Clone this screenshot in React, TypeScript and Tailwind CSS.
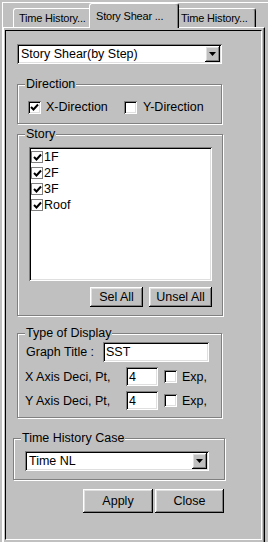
import React from 'react';

const raised =
  'bg-[#c0c0c0] shadow-[inset_-1px_-1px_0_#000,inset_1px_1px_0_#fff,inset_-2px_-2px_0_#808080,inset_2px_2px_0_#dfdfdf]';
const sunken =
  'bg-white shadow-[inset_1px_1px_0_#808080,inset_-1px_-1px_0_#fff,inset_2px_2px_0_#000,inset_-2px_-2px_0_#dfdfdf]';

function Check() {
  return (
    <svg width="9" height="9" viewBox="0 0 9 9">
      <path d="M1 4 L3.5 6.5 L8 1.5" fill="none" stroke="#000" strokeWidth="2" />
    </svg>
  );
}

function CheckBox({ checked }: { checked?: boolean }) {
  return (
    <div className={`w-[13px] h-[13px] shrink-0 flex items-center justify-center ${sunken}`}>
      {checked && <Check />}
    </div>
  );
}

function Combo({ text, className }: { text: string; className: string }) {
  return (
    <div className={`flex items-center ${sunken} ${className}`}>
      <span className="flex-1 pl-[4px] leading-[14px]">{text}</span>
      <div className={`w-[15px] h-[16px] mr-[2px] flex items-center justify-center ${raised}`}>
        <svg width="7" height="4" viewBox="0 0 7 4">
          <path d="M0 0 H7 L3.5 4 Z" fill="#000" />
        </svg>
      </div>
    </div>
  );
}

function Group({ label, className, children }: { label: string; className: string; children?: React.ReactNode }) {
  return (
    <div className={`relative border border-[#808080] shadow-[inset_1px_1px_0_#fff,1px_1px_0_#fff] ${className}`}>
      <span className="absolute -top-[8px] left-[7px] bg-[#c0c0c0] px-[1px] leading-[14px]">{label}</span>
      {children}
    </div>
  );
}

function Button({ label, className }: { label: string; className: string }) {
  return (
    <div className={`flex items-center justify-center leading-[14px] ${raised} ${className}`}>{label}</div>
  );
}

export default function App() {
  const stories = ['1F', '2F', '3F', 'Roof'];

  return (
    <div className="w-[268px] h-[542px] bg-[#c0c0c0] overflow-hidden pt-[2px] pl-[2px] font-['Liberation_Sans',Arial,sans-serif] text-[12.5px] text-black">
      <div className="h-[540px] w-[266px] border-t border-l border-white flex flex-col">
        {/* Tabs */}
        <div className="h-[24px] flex items-end pl-[10px] relative z-10 text-[11px] tracking-[-0.2px]">
          <div className="w-[77px] h-[19px] border-t border-l border-white rounded-tl-[3px] pl-[5px] pt-[2px] leading-[14px] whitespace-nowrap overflow-hidden">
            Time History...
          </div>
          <div className="w-[90px] h-[25px] -mb-[1px] -ml-[1px] bg-[#c0c0c0] border-t border-l border-r border-t-white border-l-white border-r-black rounded-tl-[3px] rounded-tr-[3px] shadow-[inset_-1px_0_0_#808080] pl-[6px] pt-[5px] leading-[14px] whitespace-nowrap relative z-10">
            Story Shear ...
          </div>
          <div className="w-[78px] h-[19px] -ml-[1px] border-t border-r border-t-white border-r-black rounded-tr-[3px] shadow-[inset_-1px_0_0_#808080] pl-[3px] pt-[2px] leading-[14px] whitespace-nowrap overflow-hidden">
            Time History...
          </div>
        </div>

        {/* Panel */}
        <div className="flex-1 w-[262px] border-t border-l border-r border-t-white border-l-white border-r-black shadow-[inset_-1px_0_0_#808080] pt-[2px] pl-[1px]">
          <div className="w-[257px] h-[510px] border border-t-black border-l-black border-r-white border-b-white flex flex-col">
            <Combo text="Story Shear(by Step)" className="ml-[11px] mt-[13px] w-[205px] h-[20px]" />

            <Group label="Direction" className="ml-[11px] mt-[20px] w-[205px] h-[40px]">
              <div className="flex items-center pl-[10px] pt-[15px]">
                <div className="flex items-center w-[96px]">
                  <CheckBox checked />
                  <span className="ml-[5px] leading-[14px]">X-Direction</span>
                </div>
                <CheckBox />
                <span className="ml-[6px] leading-[14px]">Y-Direction</span>
              </div>
            </Group>

            <Group label="Story" className="ml-[11px] mt-[10px] w-[206px] h-[182px]">
              <div className="ml-[11px] mt-[12px] w-[183px]">
                <div className={`h-[134px] p-[2px] ${sunken}`}>
                  {stories.map((s) => (
                    <div key={s} className="h-[16px] flex items-center">
                      <div className="w-[12px] h-[12px] border border-[#808080] bg-white flex items-center justify-center">
                        <Check />
                      </div>
                      <span className="ml-[1px] leading-[14px]">{s}</span>
                    </div>
                  ))}
                </div>
                <div className="flex justify-end gap-[6px] mt-[6px]">
                  <Button label="Sel All" className="w-[53px] h-[20px]" />
                  <Button label="Unsel All" className="w-[63px] h-[20px]" />
                </div>
              </div>
            </Group>

            <Group label="Type of Display" className="ml-[11px] mt-[17px] w-[205px] h-[85px]">
              <div className="flex items-center pl-[8px] mt-[8px]">
                <span className="w-[77px] leading-[14px]">Graph Title :</span>
                <div className={`w-[106px] h-[20px] pl-[3px] flex items-center leading-[14px] ${sunken}`}>SST</div>
              </div>
              <div className="flex items-center pl-[7px] mt-[5px]">
                <span className="w-[101px] leading-[14px]">X Axis Deci, Pt,</span>
                <div className={`w-[32px] h-[19px] pl-[3px] flex items-center leading-[14px] ${sunken}`}>4</div>
                <div className="ml-[6px]"><CheckBox /></div>
                <span className="ml-[5px] leading-[14px]">Exp,</span>
              </div>
              <div className="flex items-center pl-[7px] mt-[5px]">
                <span className="w-[101px] leading-[14px]">Y Axis Deci, Pt,</span>
                <div className={`w-[32px] h-[19px] pl-[3px] flex items-center leading-[14px] ${sunken}`}>4</div>
                <div className="ml-[6px]"><CheckBox /></div>
                <span className="ml-[5px] leading-[14px]">Exp,</span>
              </div>
            </Group>

            <Group label="Time History Case" className="ml-[7px] mt-[20px] w-[212px] h-[42px]">
              <Combo text="Time NL" className="ml-[11px] mt-[12px] w-[184px] h-[20px]" />
            </Group>

            <div className="flex ml-[77px] mt-[9px] gap-[2px]">
              <Button label="Apply" className="w-[70px] h-[24px]" />
              <Button label="Close" className="w-[69px] h-[24px]" />
            </div>
          </div>
        </div>
      </div>
    </div>
  );
}
